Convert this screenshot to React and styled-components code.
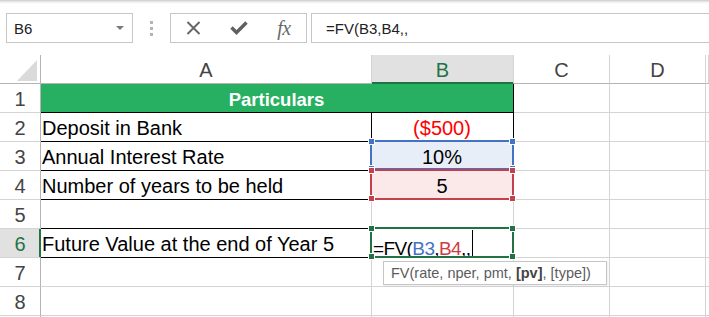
import React from "react";
import styled, { createGlobalStyle, css } from "styled-components";

const GRID = "#d4d4d4";
const HEAD_LINE = "#b4b4b4";
const BLACK = "#000";
const XL_GREEN = "#217346";
const BLUE = "#4472c4";
const RED = "#c4404a";

const W = { H: 41, A: 331, B: 142, C: 96, D: 96, E: 3 };

const GlobalStyle = createGlobalStyle`
  html, body { margin: 0; padding: 0; background: #fff; overflow: hidden; }
  body { font-family: "Liberation Sans", Arial, sans-serif; }
  #root { width: 709px; height: 317px; overflow: hidden; }
`;

const Page = styled.div`
  width: 709px;
  height: 317px;
  display: flex;
  flex-direction: column;
  overflow: hidden;
  background: #fff;
`;

const TopShade = styled.div`
  flex: none;
  height: 4px;
  background: linear-gradient(#cbcbcb, #f4f4f4 60%, #fff);
`;

const FormulaBar = styled.div`
  flex: none;
  display: flex;
  height: 30px;
  margin-top: 9px;
  padding-left: 6px;
`;

const Box = styled.div`
  box-sizing: border-box;
  border: 1px solid #c6c6c6;
  background: #fff;
  display: flex;
  align-items: center;
`;

const NameBox = styled(Box)`
  width: 127px;
  padding: 0 8px 0 7px;
  justify-content: space-between;
  font-size: 15px;
  color: #222;
`;

const Caret = styled.span`
  width: 0;
  height: 0;
  border-left: 4px solid transparent;
  border-right: 4px solid transparent;
  border-top: 4px solid #7a7a7a;
`;

const Grip = styled.div`
  width: 37px;
  display: flex;
  flex-direction: column;
  align-items: center;
  justify-content: center;
  gap: 3px;
`;

const GripDot = styled.span`
  width: 3px;
  height: 3px;
  background: #b3b3b3;
`;

const Buttons = styled(Box)`
  width: 137px;
`;

const IconSlot = styled.div`
  flex: 1;
  display: flex;
  align-items: center;
  justify-content: center;
  color: #666;
`;

const Fx = styled.span`
  font-family: "Liberation Serif", "Times New Roman", serif;
  font-style: italic;
  font-size: 20px;
  color: #6a6a6a;
  letter-spacing: -0.5px;
  margin-left: 1px;
`;

const FormulaInput = styled(Box)`
  flex: 1;
  margin-left: 4px;
  border-right: none;
  padding-left: 14px;
  font-size: 15px;
  color: #222;
`;

const Sheet = styled.div`
  flex: none;
  margin-top: 12px;
  display: flex;
  flex-direction: column;
`;

const Row = styled.div`
  flex: none;
  display: flex;
  height: 29px;
`;

const CornerCell = styled.div`
  box-sizing: border-box;
  flex: none;
  width: ${W.H}px;
  border-right: 1px solid ${HEAD_LINE};
  border-bottom: 1px solid ${HEAD_LINE};
  display: flex;
  align-items: flex-end;
  justify-content: flex-end;
  padding: 0 3px 2px 0;
`;

const CornerTriangle = styled.div`
  width: 20px;
  height: 21px;
  background: #dadada;
  clip-path: polygon(100% 0, 100% 100%, 0 100%);
`;

const headerText = css`
  box-sizing: border-box;
  flex: none;
  display: flex;
  align-items: flex-end;
  justify-content: center;
  padding-bottom: 1px;
  font-size: 20px;
  line-height: 23px;
  color: #444;
`;

const ColHeader = styled.div`
  ${headerText};
  width: ${(p) => p.$w}px;
  border-right: 1px solid ${GRID};
  border-bottom: 1px solid ${HEAD_LINE};
  ${(p) =>
    p.$selected &&
    css`
      background: #e1e1e1;
      color: ${XL_GREEN};
      border-bottom-color: ${XL_GREEN};
      box-shadow: inset 0 -1px 0 ${XL_GREEN};
    `}
`;

const RowHeader = styled.div`
  ${headerText};
  width: ${W.H}px;
  border-right: 1px solid ${HEAD_LINE};
  border-bottom: 1px solid ${GRID};
  ${(p) =>
    p.$selected &&
    css`
      background: #e1e1e1;
      color: ${XL_GREEN};
      border-right-color: ${XL_GREEN};
      box-shadow: inset -1px 0 0 ${XL_GREEN};
    `}
`;

const Cell = styled.div`
  position: relative;
  box-sizing: border-box;
  flex: none;
  width: ${(p) => p.$w}px;
  border-right: 1px solid ${(p) => p.$r || GRID};
  border-bottom: 1px solid ${(p) => p.$b || GRID};
  background: ${(p) => p.$bg || "#fff"};
  color: ${(p) => p.$color || "#000"};
  display: flex;
  align-items: flex-end;
  justify-content: ${(p) => (p.$center ? "center" : "flex-start")};
  padding: 0 2px 1px 1px;
  font-size: 20px;
  line-height: 23px;
  white-space: nowrap;
`;

const TitleCell = styled(Cell)`
  background: #28b062;
  color: #fff;
  font-weight: bold;
  font-size: 18.5px;
`;

const Frame = styled.div`
  position: absolute;
  top: -2px;
  left: -2px;
  right: -1px;
  bottom: ${(p) => (p.$flush ? "0" : "-1px")};
  border: 2px solid ${(p) => p.$c};
  z-index: 2;
  pointer-events: none;
`;

const Handle = styled.span`
  position: absolute;
  width: 5px;
  height: 5px;
  background: ${(p) => p.$c};
  box-shadow: 0 0 0 1px #fff;
  ${(p) => (p.$v === "t" ? "top: -3px;" : "bottom: -3px;")}
  ${(p) => (p.$h === "l" ? "left: -3px;" : "right: -3px;")}
`;

const EditLine = styled.div`
  display: flex;
  align-items: flex-end;
  margin-bottom: -1px;
  margin-left: 0;
`;

const EditText = styled.span`
  font-size: 19px;
  line-height: 17px;
  letter-spacing: -0.6px;
  color: #000;
`;

const Ref = styled.span`
  color: ${(p) => p.$c};
`;

const TextCursor = styled.span`
  width: 1px;
  height: 26px;
  background: #000;
  margin: 0 0 1px 2px;
`;

const Tooltip = styled.div`
  position: absolute;
  top: 32px;
  left: 11px;
  z-index: 3;
  box-sizing: border-box;
  width: 224px;
  height: 24px;
  background: #fff;
  border: 1px solid #c6c6c6;
  box-shadow: 1px 1px 2px rgba(0, 0, 0, 0.08);
  display: flex;
  align-items: center;
  padding-left: 7px;
  font-size: 14.5px;
  color: #5c5c5c;
  white-space: nowrap;
`;

const ArgBold = styled.b`
  color: #444;
`;

function RangeMarker({ color, flush }) {
  return (
    <Frame $c={color} $flush={flush}>
      <Handle $c={color} $v="t" $h="l" />
      <Handle $c={color} $v="t" $h="r" />
      <Handle $c={color} $v="b" $h="l" />
      <Handle $c={color} $v="b" $h="r" />
    </Frame>
  );
}

function Tail({ b }) {
  return (
    <>
      <Cell $w={W.C} $b={b} />
      <Cell $w={W.D} $b={b} />
      <Cell $w={W.E} $r="transparent" />
    </>
  );
}

const XIcon = () => (
  <svg width="15" height="14" viewBox="0 0 15 14">
    <path d="M1.5 1 L13.5 13 M13.5 1 L1.5 13" stroke="#666" strokeWidth="2" fill="none" />
  </svg>
);

const CheckIcon = () => (
  <svg width="18" height="14" viewBox="0 0 18 14">
    <path d="M1.5 6.5 L6.5 11.5 L16.5 1.5" stroke="#606060" strokeWidth="3.4" fill="none" />
  </svg>
);

export default function App() {
  return (
    <Page>
      <GlobalStyle />
      <TopShade />
      <FormulaBar>
        <NameBox>
          <span>B6</span>
          <Caret />
        </NameBox>
        <Grip>
          <GripDot />
          <GripDot />
          <GripDot />
        </Grip>
        <Buttons>
          <IconSlot>
            <XIcon />
          </IconSlot>
          <IconSlot>
            <CheckIcon />
          </IconSlot>
          <IconSlot>
            <Fx>fx</Fx>
          </IconSlot>
        </Buttons>
        <FormulaInput>=FV(B3,B4,,</FormulaInput>
      </FormulaBar>

      <Sheet>
        <Row>
          <CornerCell>
            <CornerTriangle />
          </CornerCell>
          <ColHeader $w={W.A}>A</ColHeader>
          <ColHeader $w={W.B} $selected>
            B
          </ColHeader>
          <ColHeader $w={W.C}>C</ColHeader>
          <ColHeader $w={W.D}>D</ColHeader>
          <ColHeader $w={W.E} />
        </Row>

        <Row>
          <RowHeader>1</RowHeader>
          <TitleCell $w={W.A + W.B} $r={BLACK} $b={BLACK} $center>
            Particulars
          </TitleCell>
          <Tail />
        </Row>

        <Row>
          <RowHeader>2</RowHeader>
          <Cell $w={W.A} $r={BLACK} $b={BLACK}>
            Deposit in Bank
          </Cell>
          <Cell $w={W.B} $r={BLACK} $b={BLACK} $center $color="#ff0000">
            ($500)
          </Cell>
          <Tail />
        </Row>

        <Row>
          <RowHeader>3</RowHeader>
          <Cell $w={W.A} $r={BLACK} $b={BLACK}>
            Annual Interest Rate
          </Cell>
          <Cell $w={W.B} $r={BLACK} $b={BLACK} $center $bg="#e8eef8">
            10%
            <RangeMarker color={BLUE} flush />
          </Cell>
          <Tail />
        </Row>

        <Row>
          <RowHeader>4</RowHeader>
          <Cell $w={W.A} $r={BLACK} $b={BLACK}>
            Number of years to be held
          </Cell>
          <Cell $w={W.B} $r={BLACK} $b={BLACK} $center $bg="#fbe9ea">
            5
            <RangeMarker color={RED} />
          </Cell>
          <Tail />
        </Row>

        <Row>
          <RowHeader>5</RowHeader>
          <Cell $w={W.A} $b={BLACK} />
          <Cell $w={W.B} />
          <Tail />
        </Row>

        <Row>
          <RowHeader $selected>6</RowHeader>
          <Cell $w={W.A} $r={BLACK} $b={BLACK}>
            Future Value at the end of Year 5
          </Cell>
          <Cell $w={W.B} $b={BLACK}>
            <EditLine>
              <EditText>
                =FV(<Ref $c={BLUE}>B3</Ref>,<Ref $c="#d13b44">B4</Ref>,,
              </EditText>
              <TextCursor />
            </EditLine>
            <RangeMarker color={XL_GREEN} />
            <Tooltip>
              FV(rate, nper, pmt,&nbsp;<ArgBold>[pv]</ArgBold>, [type])
            </Tooltip>
          </Cell>
          <Tail />
        </Row>

        {[7, 8].map((n) => (
          <Row key={n}>
            <RowHeader>{n}</RowHeader>
            <Cell $w={W.A} />
            <Cell $w={W.B} />
            <Tail />
          </Row>
        ))}
        <Row>
          <RowHeader />
          <Cell $w={W.A} />
          <Cell $w={W.B} />
          <Tail />
        </Row>
      </Sheet>
    </Page>
  );
}
